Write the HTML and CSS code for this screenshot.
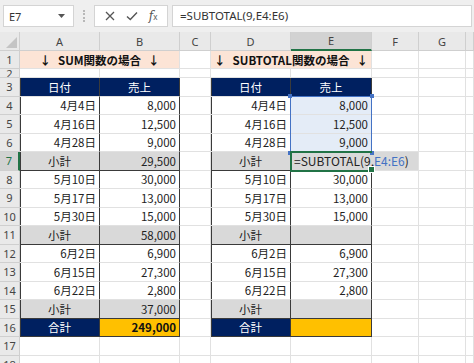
FILE: index.html
```html
<!DOCTYPE html>
<html lang="ja">
<head>
<meta charset="utf-8">
<title>SUBTOTAL</title>
<link rel="stylesheet" href="styles.css">
</head>
<body>
<div class="toolbar">
  <div class="namebox"><span>E7</span><svg width="7" height="4" viewBox="0 0 7 4"><path d="M0 0H7L3.5 4Z" fill="#555"/></svg></div>
  <div class="sep"></div>
  <div class="fxbox">
    <svg width="10" height="10" viewBox="0 0 10 10"><path d="M1 1L9 9M9 1L1 9" stroke="#555" stroke-width="1.3"/></svg>
    <svg width="12" height="10" viewBox="0 0 12 10"><path d="M1 5.5L4.3 8.5L11 1.5" stroke="#555" stroke-width="1.4" fill="none"/></svg>
    <span class="fx"><i>f</i><small>x</small></span>
  </div>
  <div class="formula">=SUBTOTAL(9,E4:E6)</div>
</div>
<div class="sheet">
  <div class="corner"></div>
  <div class="ch">A</div><div class="ch">B</div><div class="ch">C</div><div class="ch">D</div><div class="ch sel">E</div><div class="ch">F</div><div class="ch">G</div><div class="ch"></div>

  <div class="rh">1</div>
  <div class="c peach span2"><span>↓</span><span>SUM関数の場合</span><span>↓</span></div><div class="c"></div>
  <div class="c peach span2"><span>↓</span><span>SUBTOTAL関数の場合</span><span>↓</span></div><div class="c"></div><div class="c"></div><div class="c"></div>

  <div class="rh short">2</div>
  <div class="c"></div><div class="c"></div><div class="c"></div><div class="c"></div><div class="c"></div><div class="c"></div><div class="c"></div><div class="c"></div>

  <div class="rh">3</div>
  <div class="c navy tl">日付</div><div class="c navy tr">売上</div><div class="c"></div>
  <div class="c navy tl">日付</div><div class="c navy tr">売上</div><div class="c"></div><div class="c"></div><div class="c"></div>

  <div class="rh">4</div>
  <div class="c r tl">4月4日</div><div class="c r tr">8,000</div><div class="c"></div>
  <div class="c r tl">4月4日</div><div class="c r tr hl">8,000</div><div class="c"></div><div class="c"></div><div class="c"></div>

  <div class="rh">5</div>
  <div class="c r tl">4月16日</div><div class="c r tr">12,500</div><div class="c"></div>
  <div class="c r tl">4月16日</div><div class="c r tr hl">12,500</div><div class="c"></div><div class="c"></div><div class="c"></div>

  <div class="rh">6</div>
  <div class="c r tl">4月28日</div><div class="c r tr">9,000</div><div class="c"></div>
  <div class="c r tl">4月28日</div><div class="c r tr hl">9,000</div><div class="c"></div><div class="c"></div><div class="c"></div>

  <div class="rh selrow">7</div>
  <div class="c sub tl">小計</div><div class="c sub r tr">29,500</div><div class="c"></div>
  <div class="c sub tl">小計</div><div class="c editor span2">=SUBTOTAL(9,<span class="ref">E4:E6</span>)</div><div class="c"></div><div class="c"></div>

  <div class="rh">8</div>
  <div class="c r tl">5月10日</div><div class="c r tr">30,000</div><div class="c"></div>
  <div class="c r tl">5月10日</div><div class="c r tr">30,000</div><div class="c"></div><div class="c"></div><div class="c"></div>

  <div class="rh">9</div>
  <div class="c r tl">5月17日</div><div class="c r tr">13,000</div><div class="c"></div>
  <div class="c r tl">5月17日</div><div class="c r tr">13,000</div><div class="c"></div><div class="c"></div><div class="c"></div>

  <div class="rh">10</div>
  <div class="c r tl">5月30日</div><div class="c r tr">15,000</div><div class="c"></div>
  <div class="c r tl">5月30日</div><div class="c r tr">15,000</div><div class="c"></div><div class="c"></div><div class="c"></div>

  <div class="rh">11</div>
  <div class="c sub tl">小計</div><div class="c sub r tr">58,000</div><div class="c"></div>
  <div class="c sub tl">小計</div><div class="c sub r tr"></div><div class="c"></div><div class="c"></div><div class="c"></div>

  <div class="rh">12</div>
  <div class="c r tl">6月2日</div><div class="c r tr">6,900</div><div class="c"></div>
  <div class="c r tl">6月2日</div><div class="c r tr">6,900</div><div class="c"></div><div class="c"></div><div class="c"></div>

  <div class="rh">13</div>
  <div class="c r tl">6月15日</div><div class="c r tr">27,300</div><div class="c"></div>
  <div class="c r tl">6月15日</div><div class="c r tr">27,300</div><div class="c"></div><div class="c"></div><div class="c"></div>

  <div class="rh">14</div>
  <div class="c r tl">6月22日</div><div class="c r tr">2,800</div><div class="c"></div>
  <div class="c r tl">6月22日</div><div class="c r tr">2,800</div><div class="c"></div><div class="c"></div><div class="c"></div>

  <div class="rh">15</div>
  <div class="c sub tl">小計</div><div class="c sub r tr">37,000</div><div class="c"></div>
  <div class="c sub tl">小計</div><div class="c sub r tr"></div><div class="c"></div><div class="c"></div><div class="c"></div>

  <div class="rh">16</div>
  <div class="c navy tl last">合計</div><div class="c gold r tr last">249,000</div><div class="c"></div>
  <div class="c navy tl last">合計</div><div class="c gold r tr last"></div><div class="c"></div><div class="c"></div><div class="c"></div>

  <div class="rh">17</div>
  <div class="c"></div><div class="c"></div><div class="c"></div><div class="c"></div><div class="c"></div><div class="c"></div><div class="c"></div><div class="c"></div>

  <div class="rh">18</div>
  <div class="c"></div><div class="c"></div><div class="c"></div><div class="c"></div><div class="c"></div><div class="c"></div><div class="c"></div><div class="c"></div>

  <div class="range"><i class="hd tlh"></i><i class="hd trh"></i><i class="hd blh"></i><i class="hd brh"></i></div>
  <div class="active"><i class="fill"></i></div>
</div>
</body>
</html>
```
FILE: styles.css
```css
html, body {
  margin: 0;
  padding: 0;
}
body {
  width: 474px;
  height: 363px;
  overflow: hidden;
  background: #fff;
  font-family: "Noto Sans CJK JP", "Noto Sans", sans-serif;
}
.toolbar {
  display: flex;
  align-items: center;
  height: 32px;
  box-sizing: border-box;
  padding: 0 2px 0 3px;
  background: #efefef;
}
.namebox {
  width: 71px;
  height: 22px;
  box-sizing: border-box;
  background: #fff;
  border: 1px solid #d4d4d4;
  display: flex;
  align-items: center;
  justify-content: space-between;
  padding: 0 8px 0 5px;
  font: 11px "Noto Sans", sans-serif;
  color: #333;
}
.sep {
  width: 0;
  height: 12px;
  border-left: 2px dotted #b8b8b8;
  margin: 0 9px;
}
.fxbox {
  width: 74px;
  height: 22px;
  box-sizing: border-box;
  background: #fff;
  border: 1px solid #d4d4d4;
  display: flex;
  align-items: center;
  justify-content: space-around;
  padding: 0 4px;
}
.fx {
  font: 12px "DejaVu Serif", serif;
  color: #555;
}
.fx small {
  font-size: 8px;
  font-family: "Noto Sans", sans-serif;
}
.formula {
  flex: 1;
  height: 22px;
  box-sizing: border-box;
  margin-left: 4px;
  background: #fff;
  border: 1px solid #d4d4d4;
  padding-left: 7px;
  font: 11.5px/20px "Noto Sans", sans-serif;
  color: #333;
}
.sheet {
  display: grid;
  position: relative;
  grid-template-columns: 20px 80px 80px 31px 80px 81px 47px 47px 1fr;
  grid-template-rows: 19px 18px 9px repeat(16, 18.5px);
}
.corner {
  background: #e9e9e9;
  border-right: 1px solid #cfcfcf;
  border-bottom: 1px solid #cfcfcf;
  position: relative;
}
.corner::after {
  content: "";
  position: absolute;
  right: 2px;
  bottom: 2px;
  border-style: solid;
  border-width: 0 0 11px 11px;
  border-color: transparent transparent #c4c4c4 transparent;
}
.ch, .rh {
  background: #e9e9e9;
  border-right: 1px solid #cfcfcf;
  border-bottom: 1px solid #cfcfcf;
  box-sizing: border-box;
  display: flex;
  align-items: center;
  justify-content: center;
  font: 11px "Noto Sans", sans-serif;
  color: #444;
  overflow: hidden;
}
.ch.sel {
  background: #d2d2d2;
  border-bottom: 2px solid #217346;
}
.rh.selrow {
  background: #d2d2d2;
  border-right: 2px solid #217346;
  color: #217346;
}
.rh.short {
  align-items: flex-start;
  line-height: 9px;
}
.c {
  border-right: 1px solid #e1e1e1;
  border-bottom: 1px solid #e1e1e1;
  box-sizing: border-box;
  display: flex;
  align-items: center;
  padding: 0 3px;
  font-size: 11.5px;
  color: #222;
  white-space: nowrap;
  overflow: hidden;
}
.r { justify-content: flex-end; }
.span2 { grid-column: span 2; }
.peach {
  background: #fce4d6;
  font-weight: bold;
  justify-content: center;
  gap: 7px;
  color: #111;
}
.navy {
  background: #002060;
  color: #fff;
  justify-content: center;
}
.sub {
  background: #d9d9d9;
  justify-content: center;
}
.sub.r { justify-content: flex-end; }
.gold {
  background: #ffc000;
  font-weight: bold;
  color: #111;
}
.tl {
  box-shadow: inset 1px 0 0 #3a3a3a;
  border-right-color: #3a3a3a;
}
.tr { border-right-color: #3a3a3a; }
.sub, .last { border-bottom-color: #3a3a3a; }
.hl { background: #e4ecf7; }
.editor {
  background: #d9d9d9;
  font-size: 12px;
  color: #222;
}
.ref { color: #4472c4; }
.range {
  position: absolute;
  grid-row: 5 / 8;
  grid-column: 6 / 7;
  inset: -1px 0 -1px -1px;
  border: 1px solid #4472c4;
}
.hd {
  position: absolute;
  width: 4px;
  height: 4px;
  background: #4472c4;
}
.tlh { left: -3px; top: -3px; }
.trh { right: -3px; top: -3px; }
.blh { left: -3px; bottom: -3px; }
.brh { right: -3px; bottom: -3px; }
.active {
  position: absolute;
  grid-row: 8 / 9;
  grid-column: 6 / 7;
  inset: -1px 0 -1px -1px;
  border: 2px solid #217346;
  border-right: 0;
}
.fill {
  position: absolute;
  right: -3px;
  bottom: -3px;
  width: 5px;
  height: 5px;
  background: #217346;
  border: 1px solid #fff;
}
```
